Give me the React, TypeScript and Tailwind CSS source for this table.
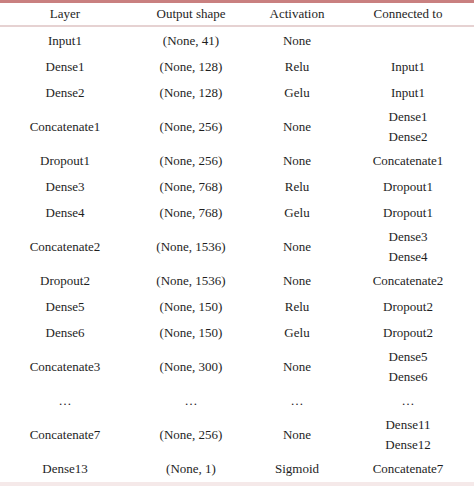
import React from "react";

type Row = {
  layer: string;
  shape: string;
  act: string;
  conn: string[];
};

const rows: Row[] = [
  { layer: "Input1", shape: "(None, 41)", act: "None", conn: [] },
  { layer: "Dense1", shape: "(None, 128)", act: "Relu", conn: ["Input1"] },
  { layer: "Dense2", shape: "(None, 128)", act: "Gelu", conn: ["Input1"] },
  { layer: "Concatenate1", shape: "(None, 256)", act: "None", conn: ["Dense1", "Dense2"] },
  { layer: "Dropout1", shape: "(None, 256)", act: "None", conn: ["Concatenate1"] },
  { layer: "Dense3", shape: "(None, 768)", act: "Relu", conn: ["Dropout1"] },
  { layer: "Dense4", shape: "(None, 768)", act: "Gelu", conn: ["Dropout1"] },
  { layer: "Concatenate2", shape: "(None, 1536)", act: "None", conn: ["Dense3", "Dense4"] },
  { layer: "Dropout2", shape: "(None, 1536)", act: "None", conn: ["Concatenate2"] },
  { layer: "Dense5", shape: "(None, 150)", act: "Relu", conn: ["Dropout2"] },
  { layer: "Dense6", shape: "(None, 150)", act: "Gelu", conn: ["Dropout2"] },
  { layer: "Concatenate3", shape: "(None, 300)", act: "None", conn: ["Dense5", "Dense6"] },
  { layer: "…", shape: "…", act: "…", conn: ["…"] },
  { layer: "Concatenate7", shape: "(None, 256)", act: "None", conn: ["Dense11", "Dense12"] },
  { layer: "Dense13", shape: "(None, 1)", act: "Sigmoid", conn: ["Concatenate7"] },
];

const cols = "grid grid-cols-[130px_122px_90px_132px] items-center text-center";

export default function App() {
  return (
    <div className="w-[474px] h-[486px] bg-white text-[13px] text-[#1e1e1e] font-['Liberation_Serif','Times_New_Roman',serif]">
      <div className="h-[3px] bg-[#c98080]" />
      {/* header */}
      <div className={`${cols} h-[24px] border-b-2 border-[#e6d2d2]`}>
        <div>Layer</div>
        <div>Output shape</div>
        <div>Activation</div>
        <div>Connected to</div>
      </div>
      <div className="h-[1px]" />
      {rows.map((r, i) => (
        <div
          key={i}
          className={`${cols} ${r.conn.length > 1 ? "h-[42px]" : "h-[26px]"} leading-[20px]`}
        >
          <div>{r.layer}</div>
          <div>{r.shape}</div>
          <div>{r.act}</div>
          <div className="flex flex-col">
            {r.conn.map((c) => (
              <span key={c}>{c}</span>
            ))}
          </div>
        </div>
      ))}
      <div className="h-[4px] bg-[#f5e9e9]" />
    </div>
  );
}
